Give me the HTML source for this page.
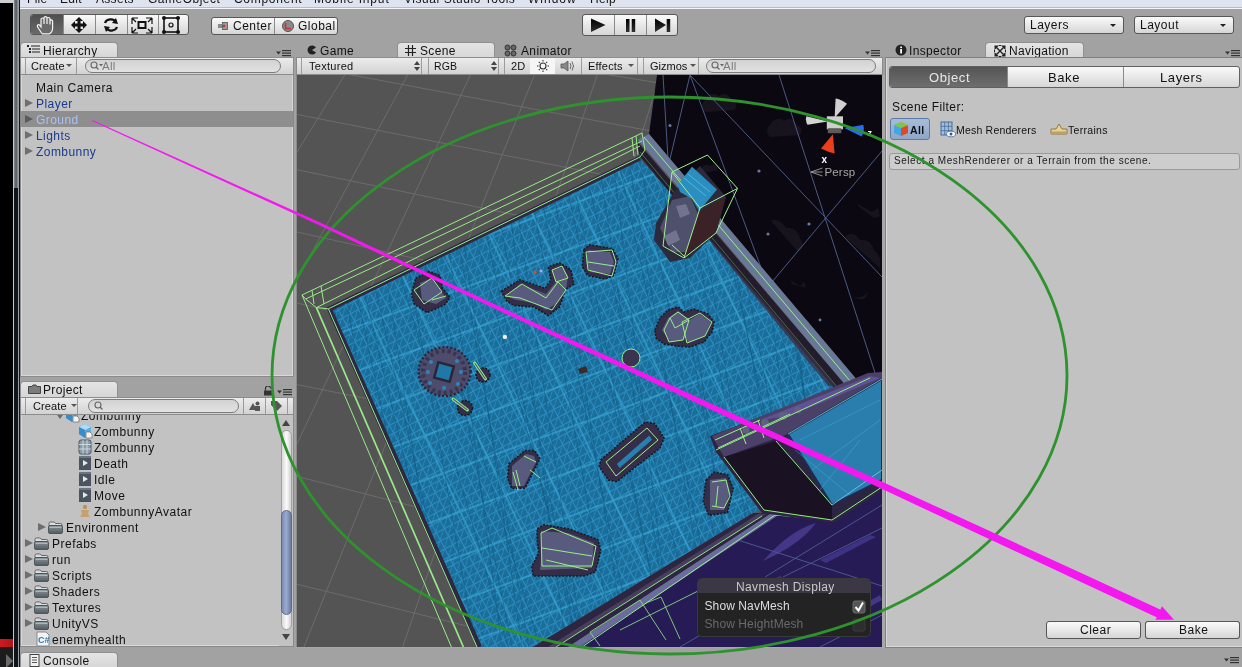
<!DOCTYPE html><html><head><meta charset="utf-8"><style>
*{margin:0;padding:0;box-sizing:border-box}
html,body{width:1242px;height:667px;overflow:hidden;background:#a2a2a2;font-family:"Liberation Sans",sans-serif;font-size:12px;color:#000}
body{position:relative}
.a{position:absolute}
.t{position:absolute;white-space:nowrap;line-height:1;will-change:transform}
.btn{position:absolute;background:linear-gradient(#fafafa,#d6d6d6);border:1px solid #575757;border-radius:3px}
.tab{position:absolute;background:linear-gradient(#e4e4e4,#d6d6d6);border:1px solid #909090;border-bottom:none;border-radius:4px 4px 0 0}
.tbar{position:absolute;background:linear-gradient(#ececec,#d2d2d2);border-top:1px solid #8c8c8c;border-bottom:1px solid #8c8c8c}
.search{position:absolute;background:linear-gradient(#d2d2d2,#e2e2e2);border:1px solid #7c7c7c;border-radius:8px}
svg{position:absolute;overflow:hidden;will-change:transform}
</style></head><body>
<div class="a" style="left:0px;top:0px;width:13px;height:667px;background:#000"></div>
<div class="a" style="left:0px;top:0px;width:13px;height:3px;background:#cfcfcf"></div>
<div class="a" style="left:0px;top:639px;width:13px;height:8px;background:linear-gradient(90deg,#d01a22,#b0141a)"></div>
<div class="a" style="left:0px;top:647px;width:13px;height:20px;background:#1c1c1c"></div>
<div class="a" style="left:6px;top:654px;width:0;height:0;border-left:7px solid #6a6a6a;border-top:7px solid transparent;border-bottom:7px solid transparent"></div>
<div class="a" style="left:13px;top:0px;width:7px;height:667px;background:linear-gradient(90deg,#c4c8cc 0,#c4c8cc 1px,#10141c 1px,#10141c 5px,#9aa0a6 5px,#9aa0a6 6px,#161616 6px)"></div>
<div class="a" style="left:14px;top:0px;width:4px;height:188px;background:linear-gradient(90deg,#8c9298,#5f6468 40%,#5f6468 70%,#9aa0a4)"></div>
<div class="a" style="left:20px;top:0px;width:1222px;height:7px;background:#dfe3ef"></div>
<div class="a" style="left:20px;top:7px;width:1222px;height:1px;background:#b8bcc8"></div>
<div class="a" style="left:20px;top:8px;width:1222px;height:1px;background:#f6f7fb"></div>
<div class="t" style="left:27px;top:-6.6px;font-size:12px;color:#141414;letter-spacing:0.3px;">File</div>
<div class="t" style="left:60px;top:-6.6px;font-size:12px;color:#141414;letter-spacing:0.3px;">Edit</div>
<div class="t" style="left:96px;top:-6.6px;font-size:12px;color:#141414;letter-spacing:0.3px;">Assets</div>
<div class="t" style="left:147.5px;top:-6.6px;font-size:12px;color:#141414;letter-spacing:0.5px;">GameObject</div>
<div class="t" style="left:233.5px;top:-6.6px;font-size:12px;color:#141414;letter-spacing:0.7px;">Component</div>
<div class="t" style="left:314px;top:-6.6px;font-size:12px;color:#141414;letter-spacing:0.85px;">Mobile Input</div>
<div class="t" style="left:403.5px;top:-6.6px;font-size:12px;color:#141414;letter-spacing:0.55px;">Visual Studio Tools</div>
<div class="t" style="left:527.5px;top:-6.6px;font-size:12px;color:#141414;letter-spacing:1.0px;">Window</div>
<div class="t" style="left:590px;top:-6.6px;font-size:12px;color:#141414;letter-spacing:0.3px;">Help</div>
<div class="btn" style="left:30px;top:14px;width:159px;height:21px"></div>
<div class="a" style="left:31px;top:15px;width:32px;height:19px;background:linear-gradient(#4e4e4e,#6a6a6a);border-radius:2px 0 0 2px"></div>
<div class="a" style="left:63px;top:15px;width:1px;height:19px;background:#8a8a8a"></div>
<div class="a" style="left:95px;top:15px;width:1px;height:19px;background:#8a8a8a"></div>
<div class="a" style="left:127px;top:15px;width:1px;height:19px;background:#8a8a8a"></div>
<div class="a" style="left:158px;top:15px;width:1px;height:19px;background:#8a8a8a"></div>
<svg style="left:30px;top:14px" width="160" height="22" viewBox="0 0 160 22">
<path d="M12 19.5 L8.5 14.5 Q6.5 11.5 8 10.8 Q9.2 10.3 11 12.8 L11 5.5 Q11 4 12.5 4 Q14 4 14 5.5 L14 10 L14 4 Q14 2.6 15.5 2.6 Q17 2.6 17 4 L17 10 L17 4.8 Q17 3.5 18.5 3.5 Q20 3.5 20 4.8 L20 10.5 L20 7 Q20 5.8 21.3 5.8 Q22.6 5.8 22.6 7 L22.6 14 Q22.6 18 19.5 19.8 L12.5 19.8 Z" fill="#6a6a6a" stroke="#f4f4f4" stroke-width="1.2"/>
<g fill="#111"><path d="M49 3 L53 7 L50.5 7 L50.5 9.5 L53 9.5 L53 7 L57 11 L53 15 L53 12.5 L50.5 12.5 L50.5 15 L53 15 L49 19 L45 15 L47.5 15 L47.5 12.5 L45 12.5 L45 15 L41 11 L45 7 L45 9.5 L47.5 9.5 L47.5 7 L45 7Z"/></g>
<g fill="none" stroke="#111" stroke-width="2.2"><path d="M75 9 A6 5 0 0 1 86 8"/><path d="M87 13 A6 5 0 0 1 76 14"/></g>
<g fill="#111"><path d="M86 4 L88 10 L82 9Z"/><path d="M76 18 L74 12 L80 13Z"/></g>
<g fill="none" stroke="#111" stroke-width="1.2"><path d="M102 4 L108 4 M102 4 L102 10 M102 4 L106 8"/><path d="M122 4 L116 4 M122 4 L122 10 M122 4 L118 8"/><path d="M102 19 L108 19 M102 19 L102 13 M102 19 L106 15"/><path d="M122 19 L116 19 M122 19 L122 13 M122 19 L118 15"/></g>
<rect x="108.5" y="8" width="7" height="6" fill="none" stroke="#111" stroke-width="2"/>
<rect x="134" y="4" width="14" height="14" fill="none" stroke="#111" stroke-width="1.6"/>
<g fill="#111"><circle cx="134" cy="4" r="2"/><circle cx="148" cy="4" r="2"/><circle cx="134" cy="18" r="2"/><circle cx="148" cy="18" r="2"/></g>
<circle cx="141" cy="11" r="2" fill="none" stroke="#111" stroke-width="1.2"/>
</svg>
<div class="btn" style="left:211px;top:17px;width:127px;height:18px"></div>
<div class="a" style="left:274px;top:18px;width:1px;height:16px;background:#8a8a8a"></div>
<svg style="left:216px;top:19px" width="14" height="14"><rect x="2" y="5" width="4" height="4" fill="#8a8a8a"/><rect x="6.5" y="3.5" width="5" height="7" fill="#9a9a9a" stroke="#555" stroke-width="0.8"/><circle cx="8" cy="7" r="1.3" fill="#d03030"/></svg>
<svg style="left:281px;top:19px" width="16" height="14"><circle cx="7" cy="7" r="5.5" fill="#8a8a8a" stroke="#555"/><path d="M4.5 4 V9.5 H10" stroke="#c83030" stroke-width="1.6" fill="none"/></svg>
<div class="t" style="left:233px;top:20.0px;font-size:12px;color:#111;letter-spacing:0.5px;">Center</div>
<div class="t" style="left:298px;top:20.0px;font-size:12px;color:#111;letter-spacing:0.5px;">Global</div>
<div class="btn" style="left:582px;top:14px;width:96px;height:22px"></div>
<div class="a" style="left:614px;top:15px;width:1px;height:20px;background:#8a8a8a"></div>
<div class="a" style="left:646px;top:15px;width:1px;height:20px;background:#8a8a8a"></div>
<svg style="left:582px;top:14px" width="96" height="22"><defs><linearGradient id="gk" x1="0" y1="0" x2="0" y2="1"><stop offset="0" stop-color="#000"/><stop offset="1" stop-color="#303030"/></linearGradient></defs>
<path d="M9 4.5 L23.5 11 L9 18Z" fill="url(#gk)"/>
<rect x="44" y="5" width="3.5" height="13" fill="url(#gk)"/><rect x="49.7" y="5" width="3.5" height="13" fill="url(#gk)"/>
<path d="M73 4.5 L84 11 L73 18Z" fill="url(#gk)"/><rect x="84.7" y="5" width="3.5" height="13" fill="url(#gk)"/>
</svg>
<div class="btn" style="left:1024px;top:16px;width:100px;height:18px"></div>
<div class="t" style="left:1030px;top:19.0px;font-size:12px;color:#111;letter-spacing:0.5px;">Layers</div>
<div class="a" style="left:1109.5px;top:23.5px;border-left:3.5px solid transparent;border-right:3.5px solid transparent;border-top:3.5px solid #222"></div>
<div class="btn" style="left:1134px;top:16px;width:100px;height:18px"></div>
<div class="t" style="left:1140px;top:19.0px;font-size:12px;color:#111;letter-spacing:0.5px;">Layout</div>
<div class="a" style="left:1219.5px;top:23.5px;border-left:3.5px solid transparent;border-right:3.5px solid transparent;border-top:3.5px solid #222"></div>
<div class="tab" style="left:20px;top:42px;width:98px;height:16px"></div>
<svg style="left:27px;top:45px" width="14" height="10"><g fill="#222"><rect x="0" y="0" width="2" height="2"/><rect x="2" y="3" width="2" height="2"/><rect x="2" y="6" width="2" height="2"/><rect x="4" y="0.5" width="9" height="1"/><rect x="5" y="3.5" width="8" height="1"/><rect x="5" y="6.5" width="8" height="1"/></g></svg>
<div class="t" style="left:43px;top:45.0px;font-size:12px;color:#111;letter-spacing:0.35px;">Hierarchy</div>
<svg style="left:276px;top:50px" width="16" height="7"><path d="M0 1.5 L5 1.5 L2.5 4.5Z" fill="#333"/><rect x="6" y="0" width="9" height="1.2" fill="#333"/><rect x="6" y="2.5" width="9" height="1.2" fill="#333"/><rect x="6" y="5" width="9" height="1.2" fill="#333"/></svg>
<div class="tbar" style="left:20px;top:57px;width:274px;height:18px"></div>
<div class="a" style="left:20px;top:57px;width:1px;height:18px;background:#8c8c8c"></div>
<div class="a" style="left:293px;top:57px;width:1px;height:320px;background:#8a8a8a"></div>
<div class="a" style="left:20px;top:75px;width:1px;height:302px;background:#8a8a8a"></div>
<div class="a" style="left:21px;top:75px;width:272px;height:301px;background:#c2c2c2;box-shadow:inset 1px 0 #d8d8d8,inset -1px 0 #d8d8d8,inset 0 -1px #d8d8d8"></div>
<div class="a" style="left:20px;top:376px;width:274px;height:1px;background:#8a8a8a"></div>
<div class="a" style="left:25px;top:58px;width:1px;height:16px;background:#9a9a9a"></div>
<div class="a" style="left:76px;top:58px;width:1px;height:16px;background:#9a9a9a"></div>
<div class="t" style="left:31px;top:60.9px;font-size:11px;color:#111;letter-spacing:0.1px;">Create</div>
<div class="a" style="left:66px;top:64px;border-left:3px solid transparent;border-right:3px solid transparent;border-top:3px solid #555"></div>
<div class="search" style="left:85px;top:59px;width:196px;height:14px"></div>
<svg style="left:90px;top:61px" width="16" height="10"><circle cx="4" cy="4" r="3" fill="none" stroke="#666" stroke-width="1.1"/><path d="M6 6 L8.5 8.5" stroke="#666" stroke-width="1.2"/><path d="M9 3 L13 3 L11 5.5Z" fill="#666"/></svg>
<div class="t" style="left:102px;top:60.5px;font-size:11.5px;color:#7a7a7a;letter-spacing:0.3px;">All</div>
<div class="a" style="left:21px;top:111px;width:272px;height:16px;background:#8e8e8e"></div>
<div class="t" style="left:36px;top:82.0px;font-size:12px;color:#111;letter-spacing:0.45px;">Main Camera</div>
<div class="t" style="left:36px;top:98.0px;font-size:12px;color:#1c3a8c;letter-spacing:0.45px;">Player</div>
<div class="a" style="left:25px;top:99px;border-top:4.5px solid transparent;border-bottom:4.5px solid transparent;border-left:8px solid #6e6e6e"></div>
<div class="t" style="left:36px;top:114.0px;font-size:12px;color:#a8c2fa;letter-spacing:0.45px;">Ground</div>
<div class="a" style="left:25px;top:115px;border-top:4.5px solid transparent;border-bottom:4.5px solid transparent;border-left:8px solid #5a5a5a"></div>
<div class="t" style="left:36px;top:130.0px;font-size:12px;color:#1c3a8c;letter-spacing:0.45px;">Lights</div>
<div class="a" style="left:25px;top:131px;border-top:4.5px solid transparent;border-bottom:4.5px solid transparent;border-left:8px solid #6e6e6e"></div>
<div class="t" style="left:36px;top:146.0px;font-size:12px;color:#1c3a8c;letter-spacing:0.45px;">Zombunny</div>
<div class="a" style="left:25px;top:147px;border-top:4.5px solid transparent;border-bottom:4.5px solid transparent;border-left:8px solid #6e6e6e"></div>
<div class="tab" style="left:20px;top:381px;width:98px;height:16px"></div>
<svg style="left:28px;top:384px" width="14" height="11"><path d="M0.5 2.5 L4 2.5 L5 1 L8 1 L9 2.5 L12.5 2.5 L12.5 9.5 L0.5 9.5Z" fill="#7c7c7c" stroke="#444"/></svg>
<div class="t" style="left:43px;top:384.0px;font-size:12px;color:#111;letter-spacing:0.35px;">Project</div>
<svg style="left:263px;top:386px" width="10" height="10"><path d="M2.5 4.5 L2.5 2.5 A2.5 2.5 0 0 1 7.5 2.5" fill="none" stroke="#333" stroke-width="1.2"/><rect x="1" y="4.5" width="8" height="5" fill="#333"/></svg>
<svg style="left:277px;top:389px" width="16" height="7"><path d="M0 1.5 L5 1.5 L2.5 4.5Z" fill="#333"/><rect x="6" y="0" width="9" height="1.2" fill="#333"/><rect x="6" y="2.5" width="9" height="1.2" fill="#333"/><rect x="6" y="5" width="9" height="1.2" fill="#333"/></svg>
<div class="tbar" style="left:20px;top:397px;width:274px;height:18px"></div>
<div class="a" style="left:20px;top:397px;width:1px;height:18px;background:#8c8c8c"></div>
<div class="a" style="left:293px;top:397px;width:1px;height:250px;background:#8a8a8a"></div>
<div class="a" style="left:20px;top:415px;width:1px;height:232px;background:#8a8a8a"></div>
<div class="a" style="left:21px;top:415px;width:272px;height:231px;background:#c2c2c2;box-shadow:inset 1px 0 #d8d8d8,inset -1px 0 #d8d8d8,inset 0 -1px #d8d8d8"></div>
<div class="a" style="left:20px;top:646px;width:274px;height:1px;background:#8a8a8a"></div>
<div class="a" style="left:25px;top:398px;width:1px;height:16px;background:#9a9a9a"></div>
<div class="a" style="left:77px;top:398px;width:1px;height:16px;background:#9a9a9a"></div>
<div class="t" style="left:33px;top:400.9px;font-size:11px;color:#111;letter-spacing:0.1px;">Create</div>
<div class="a" style="left:71px;top:404px;border-left:3px solid transparent;border-right:3px solid transparent;border-top:3px solid #555"></div>
<div class="search" style="left:88px;top:399px;width:151px;height:14px"></div>
<svg style="left:94px;top:401px" width="12" height="10"><circle cx="4" cy="4" r="3" fill="none" stroke="#666" stroke-width="1.1"/><path d="M6 6 L8.5 8.5" stroke="#666" stroke-width="1.2"/></svg>
<div class="a" style="left:243px;top:398px;width:1px;height:16px;background:#9a9a9a"></div>
<div class="a" style="left:265px;top:398px;width:1px;height:16px;background:#9a9a9a"></div>
<div class="a" style="left:287px;top:398px;width:1px;height:16px;background:#9a9a9a"></div>
<svg style="left:248px;top:400px" width="14" height="12"><path d="M1 10 L5 3 L9 10Z" fill="#555"/><rect x="7" y="6" width="5" height="5" fill="#555"/><circle cx="9.5" cy="3.5" r="2" fill="#555"/></svg>
<svg style="left:270px;top:400px" width="14" height="12"><path d="M1 1 L7 1 L12 6 L7 11 L1 5Z" fill="#555"/></svg>
<svg style="left:0;top:0" width="0" height="0"><defs><linearGradient id="fg" x1="0" y1="0" x2="0" y2="1"><stop offset="0" stop-color="#8a969c"/><stop offset="1" stop-color="#505a60"/></linearGradient></defs></svg>
<div class="a" style="left:21px;top:415px;width:258px;height:231px;overflow:hidden">
<div class="t" style="left:60px;top:-5.0px;font-size:12px;color:#111;letter-spacing:0.5px;">Zombunny</div>
<svg style="left:43px;top:-8px" width="16" height="16"><path d="M2 4 L8 1 L14 4 L14 11 L8 15 L2 11Z" fill="#5ab0e0"/><path d="M2 4 L8 7 L14 4 L8 1Z" fill="#a8dcf8"/><path d="M8 7 L8 15 L2 11 L2 4Z" fill="#3a8cc8"/><path d="M9 9 L13 9 L15 11 L15 15 L9 15Z" fill="#f4f4f4" stroke="#555" stroke-width="0.6"/></svg>
<div class="a" style="left:34px;top:-3px;border-left:5px solid transparent;border-right:5px solid transparent;border-top:7px solid #6a6a6a"></div>
<div class="t" style="left:73px;top:11.0px;font-size:12px;color:#111;letter-spacing:0.5px;">Zombunny</div>
<svg style="left:56px;top:8px" width="16" height="16"><path d="M2 4 L8 1 L14 4 L14 11 L8 15 L2 11Z" fill="#5ab0e0"/><path d="M2 4 L8 7 L14 4 L8 1Z" fill="#a8dcf8"/><path d="M8 7 L8 15 L2 11 L2 4Z" fill="#3a8cc8"/><path d="M9 9 L13 9 L15 11 L15 15 L9 15Z" fill="#f4f4f4" stroke="#555" stroke-width="0.6"/></svg>
<div class="t" style="left:73px;top:27.0px;font-size:12px;color:#111;letter-spacing:0.5px;">Zombunny</div>
<svg style="left:56px;top:24px" width="16" height="16"><rect x="2" y="1" width="12" height="14" rx="2" fill="#8a9aa8" stroke="#4a5a68"/><path d="M6 1 V15 M10 1 V15 M2 5.5 H14 M2 10 H14" stroke="#d8e4ec" stroke-width="0.8"/></svg>
<div class="t" style="left:73px;top:43.0px;font-size:12px;color:#111;letter-spacing:0.5px;">Death</div>
<svg style="left:56px;top:40px" width="16" height="16"><rect x="2" y="1" width="12" height="14" fill="#4a5560"/><rect x="2" y="1" width="12" height="2" fill="#6a7580"/><path d="M6 5 L11 8 L6 11Z" fill="#e8e8e8"/></svg>
<div class="t" style="left:73px;top:59.0px;font-size:12px;color:#111;letter-spacing:0.5px;">Idle</div>
<svg style="left:56px;top:56px" width="16" height="16"><rect x="2" y="1" width="12" height="14" fill="#4a5560"/><rect x="2" y="1" width="12" height="2" fill="#6a7580"/><path d="M6 5 L11 8 L6 11Z" fill="#e8e8e8"/></svg>
<div class="t" style="left:73px;top:75.0px;font-size:12px;color:#111;letter-spacing:0.5px;">Move</div>
<svg style="left:56px;top:72px" width="16" height="16"><rect x="2" y="1" width="12" height="14" fill="#4a5560"/><rect x="2" y="1" width="12" height="2" fill="#6a7580"/><path d="M6 5 L11 8 L6 11Z" fill="#e8e8e8"/></svg>
<div class="t" style="left:73px;top:91.0px;font-size:12px;color:#111;letter-spacing:0.5px;">ZombunnyAvatar</div>
<svg style="left:56px;top:88px" width="16" height="16"><circle cx="8" cy="4" r="2.2" fill="#c09060"/><path d="M4 7 L12 7 L11 11 L13 14 L3 14 L5 11Z" fill="#c8a070"/></svg>
<div class="t" style="left:45px;top:107.0px;font-size:12px;color:#111;letter-spacing:0.5px;">Environment</div>
<svg style="left:27px;top:106px" width="16" height="14"><path d="M1 4.5 L1 2.5 Q1 1 2.5 1 L5.5 1 Q7 1 7.5 2.5 L12.5 2.5 Q14 2.5 14 4 L14 4.5Z" fill="#dcdcdc" stroke="#5a5a5a" stroke-width="0.9"/><rect x="0.5" y="4.5" width="14" height="8" rx="1.5" fill="url(#fg)" stroke="#4a5054" stroke-width="0.9"/><rect x="1.5" y="5.8" width="12" height="1" fill="#b4c4cc"/></svg>
<div class="a" style="left:17px;top:108px;border-top:4.5px solid transparent;border-bottom:4.5px solid transparent;border-left:8px solid #6e6e6e"></div>
<div class="t" style="left:31px;top:123.0px;font-size:12px;color:#111;letter-spacing:0.5px;">Prefabs</div>
<svg style="left:13px;top:122px" width="16" height="14"><path d="M1 4.5 L1 2.5 Q1 1 2.5 1 L5.5 1 Q7 1 7.5 2.5 L12.5 2.5 Q14 2.5 14 4 L14 4.5Z" fill="#dcdcdc" stroke="#5a5a5a" stroke-width="0.9"/><rect x="0.5" y="4.5" width="14" height="8" rx="1.5" fill="url(#fg)" stroke="#4a5054" stroke-width="0.9"/><rect x="1.5" y="5.8" width="12" height="1" fill="#b4c4cc"/></svg>
<div class="a" style="left:4px;top:124px;border-top:4.5px solid transparent;border-bottom:4.5px solid transparent;border-left:8px solid #6e6e6e"></div>
<div class="t" style="left:31px;top:139.0px;font-size:12px;color:#111;letter-spacing:0.5px;">run</div>
<svg style="left:13px;top:138px" width="16" height="14"><path d="M1 4.5 L1 2.5 Q1 1 2.5 1 L5.5 1 Q7 1 7.5 2.5 L12.5 2.5 Q14 2.5 14 4 L14 4.5Z" fill="#dcdcdc" stroke="#5a5a5a" stroke-width="0.9"/><rect x="0.5" y="4.5" width="14" height="8" rx="1.5" fill="url(#fg)" stroke="#4a5054" stroke-width="0.9"/><rect x="1.5" y="5.8" width="12" height="1" fill="#b4c4cc"/></svg>
<div class="a" style="left:4px;top:140px;border-top:4.5px solid transparent;border-bottom:4.5px solid transparent;border-left:8px solid #6e6e6e"></div>
<div class="t" style="left:31px;top:155.0px;font-size:12px;color:#111;letter-spacing:0.5px;">Scripts</div>
<svg style="left:13px;top:154px" width="16" height="14"><path d="M1 4.5 L1 2.5 Q1 1 2.5 1 L5.5 1 Q7 1 7.5 2.5 L12.5 2.5 Q14 2.5 14 4 L14 4.5Z" fill="#dcdcdc" stroke="#5a5a5a" stroke-width="0.9"/><rect x="0.5" y="4.5" width="14" height="8" rx="1.5" fill="url(#fg)" stroke="#4a5054" stroke-width="0.9"/><rect x="1.5" y="5.8" width="12" height="1" fill="#b4c4cc"/></svg>
<div class="a" style="left:4px;top:156px;border-top:4.5px solid transparent;border-bottom:4.5px solid transparent;border-left:8px solid #6e6e6e"></div>
<div class="t" style="left:31px;top:171.0px;font-size:12px;color:#111;letter-spacing:0.5px;">Shaders</div>
<svg style="left:13px;top:170px" width="16" height="14"><path d="M1 4.5 L1 2.5 Q1 1 2.5 1 L5.5 1 Q7 1 7.5 2.5 L12.5 2.5 Q14 2.5 14 4 L14 4.5Z" fill="#dcdcdc" stroke="#5a5a5a" stroke-width="0.9"/><rect x="0.5" y="4.5" width="14" height="8" rx="1.5" fill="url(#fg)" stroke="#4a5054" stroke-width="0.9"/><rect x="1.5" y="5.8" width="12" height="1" fill="#b4c4cc"/></svg>
<div class="a" style="left:4px;top:172px;border-top:4.5px solid transparent;border-bottom:4.5px solid transparent;border-left:8px solid #6e6e6e"></div>
<div class="t" style="left:31px;top:187.0px;font-size:12px;color:#111;letter-spacing:0.5px;">Textures</div>
<svg style="left:13px;top:186px" width="16" height="14"><path d="M1 4.5 L1 2.5 Q1 1 2.5 1 L5.5 1 Q7 1 7.5 2.5 L12.5 2.5 Q14 2.5 14 4 L14 4.5Z" fill="#dcdcdc" stroke="#5a5a5a" stroke-width="0.9"/><rect x="0.5" y="4.5" width="14" height="8" rx="1.5" fill="url(#fg)" stroke="#4a5054" stroke-width="0.9"/><rect x="1.5" y="5.8" width="12" height="1" fill="#b4c4cc"/></svg>
<div class="a" style="left:4px;top:188px;border-top:4.5px solid transparent;border-bottom:4.5px solid transparent;border-left:8px solid #6e6e6e"></div>
<div class="t" style="left:31px;top:203.0px;font-size:12px;color:#111;letter-spacing:0.5px;">UnityVS</div>
<svg style="left:13px;top:202px" width="16" height="14"><path d="M1 4.5 L1 2.5 Q1 1 2.5 1 L5.5 1 Q7 1 7.5 2.5 L12.5 2.5 Q14 2.5 14 4 L14 4.5Z" fill="#dcdcdc" stroke="#5a5a5a" stroke-width="0.9"/><rect x="0.5" y="4.5" width="14" height="8" rx="1.5" fill="url(#fg)" stroke="#4a5054" stroke-width="0.9"/><rect x="1.5" y="5.8" width="12" height="1" fill="#b4c4cc"/></svg>
<div class="a" style="left:4px;top:204px;border-top:4.5px solid transparent;border-bottom:4.5px solid transparent;border-left:8px solid #6e6e6e"></div>
<div class="t" style="left:31px;top:219.0px;font-size:12px;color:#111;letter-spacing:0.5px;">enemyhealth</div>
<svg style="left:14px;top:216px" width="16" height="16"><path d="M2 1 L11 1 L14 4 L14 15 L2 15Z" fill="#f4f4f4" stroke="#888"/><text x="3" y="12" font-size="9" font-family="Liberation Sans" fill="#2a7ab8" font-weight="bold">C#</text></svg>
</div>
<div class="a" style="left:279px;top:415px;width:14px;height:231px;background:#c2c2c2"></div>
<div class="a" style="left:281px;top:430px;width:11px;height:200px;border-radius:6px;background:linear-gradient(90deg,#d8d8d8,#fafafa 50%,#d0d0d0);border:1px solid #a0a0a0"></div>
<div class="a" style="left:281px;top:510px;width:11px;height:105px;border-radius:6px;background:linear-gradient(90deg,#7c8cb0,#9aaad0 45%,#6a7aa0);border:1px solid #5a6a8a"></div>
<div class="a" style="left:282px;top:420px;border-left:4px solid transparent;border-right:4px solid transparent;border-bottom:6px solid #444"></div>
<div class="a" style="left:282px;top:634px;border-left:4px solid transparent;border-right:4px solid transparent;border-top:6px solid #444"></div>
<div class="tab" style="left:20px;top:652px;width:98px;height:16px"></div>
<svg style="left:29px;top:654px" width="12" height="13"><rect x="1" y="0.5" width="9" height="12" fill="#f2f2f2" stroke="#444"/><path d="M3 3.5 H8 M3 6 H8 M3 8.5 H8" stroke="#444" stroke-width="0.9"/></svg>
<div class="t" style="left:43px;top:655.0px;font-size:12px;color:#111;letter-spacing:0.35px;">Console</div>
<svg style="left:1224px;top:657px" width="16" height="7"><path d="M0 1.5 L5 1.5 L2.5 4.5Z" fill="#333"/><rect x="6" y="0" width="9" height="1.2" fill="#333"/><rect x="6" y="2.5" width="9" height="1.2" fill="#333"/><rect x="6" y="5" width="9" height="1.2" fill="#333"/></svg>
<div class="tab" style="left:397px;top:42px;width:98px;height:16px"></div>
<svg style="left:306px;top:44.8px" width="12" height="10"><path d="M10 2.5 A4.6 4.6 0 1 0 10 7.5 L6 5Z" fill="#222"/></svg>
<div class="t" style="left:320px;top:45.0px;font-size:12px;color:#111;letter-spacing:0.35px;">Game</div>
<svg style="left:405px;top:45px" width="12" height="11"><path d="M3.5 0 V11 M7.5 0 V11 M0 3.5 H11 M0 7.5 H11" stroke="#222" stroke-width="1.2"/></svg>
<div class="t" style="left:420px;top:45.0px;font-size:12px;color:#111;letter-spacing:0.35px;">Scene</div>
<svg style="left:504px;top:44px" width="13" height="13"><circle cx="3.5" cy="3.5" r="2.5" fill="#666" stroke="#333"/><circle cx="9.5" cy="3.5" r="2.5" fill="#666" stroke="#333"/><circle cx="3.5" cy="9.5" r="2.5" fill="#666" stroke="#333"/><circle cx="9.5" cy="9.5" r="2.5" fill="#666" stroke="#333"/></svg>
<div class="t" style="left:520.5px;top:45.0px;font-size:12px;color:#111;letter-spacing:0.35px;">Animator</div>
<svg style="left:865px;top:50px" width="16" height="7"><path d="M0 1.5 L5 1.5 L2.5 4.5Z" fill="#333"/><rect x="6" y="0" width="9" height="1.2" fill="#333"/><rect x="6" y="2.5" width="9" height="1.2" fill="#333"/><rect x="6" y="5" width="9" height="1.2" fill="#333"/></svg>
<div class="tbar" style="left:296px;top:57px;width:587px;height:18px"></div>
<div class="a" style="left:296px;top:57px;width:1px;height:18px;background:#8a8a8a"></div>
<div class="a" style="left:882px;top:57px;width:1px;height:18px;background:#8a8a8a"></div>
<div class="a" style="left:301px;top:58px;width:1px;height:16px;background:#9c9c9c"></div>
<div class="a" style="left:421px;top:58px;width:1px;height:16px;background:#9c9c9c"></div>
<div class="a" style="left:428px;top:58px;width:1px;height:16px;background:#9c9c9c"></div>
<div class="a" style="left:498px;top:58px;width:1px;height:16px;background:#9c9c9c"></div>
<div class="a" style="left:504px;top:58px;width:1px;height:16px;background:#9c9c9c"></div>
<div class="a" style="left:581px;top:58px;width:1px;height:16px;background:#9c9c9c"></div>
<div class="a" style="left:637px;top:58px;width:1px;height:16px;background:#9c9c9c"></div>
<div class="a" style="left:643px;top:58px;width:1px;height:16px;background:#9c9c9c"></div>
<div class="a" style="left:698px;top:58px;width:1px;height:16px;background:#9c9c9c"></div>
<div class="t" style="left:308.5px;top:60.9px;font-size:11px;color:#111;letter-spacing:0.28px;">Textured</div>
<div class="t" style="left:434px;top:61.3px;font-size:10.5px;color:#111;letter-spacing:0.1px;">RGB</div>
<svg style="left:413px;top:60px" width="8" height="12"><path d="M1 5 L4 1 L7 5Z M1 7 L4 11 L7 7Z" fill="#444"/></svg>
<svg style="left:490px;top:60px" width="8" height="12"><path d="M1 5 L4 1 L7 5Z M1 7 L4 11 L7 7Z" fill="#444"/></svg>
<div class="t" style="left:510.5px;top:60.9px;font-size:11px;color:#111;letter-spacing:0.2px;">2D</div>
<div class="a" style="left:530px;top:58px;width:25px;height:16px;background:#f6f6f6"></div>
<svg style="left:533px;top:59px" width="20" height="14"><circle cx="10" cy="7" r="3" fill="none" stroke="#333" stroke-width="1.1"/><path d="M10 1 V2.5 M10 11.5 V13 M4 7 H5.5 M14.5 7 H16 M5.8 2.8 L6.8 3.8 M13.2 10.2 L14.2 11.2 M5.8 11.2 L6.8 10.2 M13.2 3.8 L14.2 2.8" stroke="#333" stroke-width="1.1"/></svg>
<svg style="left:558px;top:59px" width="20" height="14"><path d="M3 5 H6 L10 2 V12 L6 9 H3Z" fill="#888" stroke="#555" stroke-width="0.8"/><path d="M12 4 Q14 7 12 10 M14 2.5 Q17 7 14 11.5" stroke="#666" fill="none" stroke-width="1"/></svg>
<div class="t" style="left:587.5px;top:60.9px;font-size:11px;color:#111;letter-spacing:0.2px;">Effects</div>
<div class="a" style="left:628px;top:64px;border-left:3px solid transparent;border-right:3px solid transparent;border-top:3px solid #555"></div>
<div class="t" style="left:650px;top:60.9px;font-size:11px;color:#111;letter-spacing:0px;">Gizmos</div>
<div class="a" style="left:690px;top:64px;border-left:3px solid transparent;border-right:3px solid transparent;border-top:3px solid #555"></div>
<div class="search" style="left:706px;top:59px;width:170px;height:14px"></div>
<svg style="left:711px;top:61px" width="16" height="10"><circle cx="4" cy="4" r="3" fill="none" stroke="#666" stroke-width="1.1"/><path d="M6 6 L8.5 8.5" stroke="#666" stroke-width="1.2"/><path d="M9 3 L13 3 L11 5.5Z" fill="#666"/></svg>
<div class="t" style="left:723px;top:60.5px;font-size:11.5px;color:#7a7a7a;letter-spacing:0.3px;">All</div>
<div class="a" style="left:296px;top:75px;width:1px;height:572px;background:#8a8a8a"></div>
<div class="a" style="left:882px;top:75px;width:3px;height:572px;background:#a8a8a8"></div>
<div class="a" style="left:296px;top:647px;width:589px;height:1px;background:#a8a8a8"></div>
<svg style="left:297px;top:75px" width="585" height="572" viewBox="297 75 585 572">
<defs>
<pattern id="mesh" patternUnits="userSpaceOnUse" width="9" height="9" patternTransform="matrix(0.883 -0.469 0.469 0.883 0 0)"><rect width="9" height="9" fill="#1b6e9a"/><path d="M0 0.5 H9 M0.5 0 V9 M0 9 L9 0" stroke="#2c8ec2" stroke-width="1" fill="none"/></pattern>
<pattern id="big" patternUnits="userSpaceOnUse" width="48" height="42" patternTransform="matrix(0.94 -0.342 0.423 0.906 12 6)"><path d="M0 1 H48 M1 0 V42" stroke="#3aaad8" stroke-width="1.8" fill="none"/></pattern>
</defs>
<rect x="297" y="75" width="585" height="572" fill="#545454"/>
<path d="M344.8 75 L-9.8 647 M407.6 75 L98.7 647 M470.4 75 L201.6 647 M534.4 75 L303.9 647 M597.2 75 L402.7 647 M660 75 L482.7 647 M297 25 L882 118.6 M297 64.8 L882 174.2 M297 114.4 L882 229.6 M297 169.7 L882 290.8 M297 232 L882 363.0 M297 303 L882 440.5 M297 384.6 L882 501.6 M297 476.4 L882 626.7 M297 584.2 L882 728.1" stroke="#6c6c6c" stroke-width="1" fill="none"/>
<path d="M657 75 L882 75 L882 372 L856 379 L649 134 Z" fill="#0c0811"/>
<g fill="#18141d"><path d="M705 100 q6 -10 14 -4 q8 -6 12 4 q8 2 4 10 l-30 2 q-6 -6 0 -12z"/><path d="M770 125 q6 -10 14 -4 q8 -6 12 4 q8 2 4 10 l-30 2 q-6 -6 0 -12z"/><path d="M772 220 q8 -2 14 8 q10 -2 14 10 q6 8 -2 14 l-26 -30z"/><path d="M846 236 q8 -6 14 4 q10 -2 14 10 q8 6 6 18 l-34 -30z"/><path d="M858 204 l14 8 l6 -4 l2 8 l-6 2 l-16 -12z"/><path d="M852 296 q10 4 16 -4 q-2 12 -16 4z"/><path d="M790 280 l10 6 l4 -4 l2 6 l-14 -4z"/><path d="M700 170 q4 -8 10 -4 q6 -4 8 4 l-18 4z"/></g>
<path d="M690 75 L670 159 M663 75 L668 159 M690 75 L767 284 M690 75 L882 277 M779 75 L877 379 M882 151 L772 282" stroke="#4a5a84" stroke-width="1" fill="none"/>
<g fill="#6a7aa0"><circle cx="670" cy="125.5" r="1.5"/><circle cx="759" cy="171" r="1.6"/><circle cx="768" cy="234" r="1.5"/><circle cx="809" cy="224" r="1.6"/><circle cx="820" cy="320" r="1.4"/></g>
<path d="M576 647 L776 514 L834 520 L882 487 L882 647 Z" fill="#261b54"/>
<path d="M763 561 Q790 530 816 523 Q800 545 763 561Z M700 625 Q720 610 745 603 Q730 618 700 625Z M845 615 L880 595 L882 600 L850 618Z" fill="#4a3c90" opacity="0.85"/>
<path d="M700 528 L882 586 M765 577 L882 505 M783 577 L882 528 M680 647 L760 600 M820 647 L882 615" stroke="#4a5890" stroke-width="1" fill="none"/>
<clipPath id="fc"><path d="M329.5 309 L640 158 L850 394 L712 436 L718 452 L760 511 L753 513 L533 647 L482 647 Z"/></clipPath>
<path d="M329.5 309 L640 158 L850 394 L712 436 L718 452 L760 511 L753 513 L533 647 L482 647 Z" fill="url(#mesh)"/>
<path d="M329.5 309 L640 158 L850 394 L712 436 L718 452 L760 511 L753 513 L533 647 L482 647 Z" fill="url(#big)" opacity="0.6"/>
<path d="M334 306 L394 647 M347 300 L402 647 M357 295 L433 647 M364 291 L450 647 M375 286 L456 647 M387 280 L443 647 M400 274 L508 647 M409 270 L475 647 M424 262 L540 647 M435 257 L512 647 M449 250 L502 647 M459 245 L529 647 M464 243 L522 647 M476 237 L584 647 M486 232 L577 647 M501 225 L577 647 M511 220 L566 647 M518 216 L583 647 M534 208 L614 647 M543 205 L634 647 M555 199 L626 647 M568 192 L667 647 M575 189 L665 647 M588 182 L699 647 M601 176 L671 647 M614 170 L672 647 M620 167 L723 647 M629 162 L713 647 M639 157 L736 647 M656 149 L746 647 M668 143 L740 647 M678 139 L769 647 M688 134 L770 647 M701 127 L817 647 M709 124 L805 647 M716 120 L816 647 M732 112 L852 647 M745 106 L814 647 M752 102 L849 647 M760 99 L842 647 M772 93 L831 647 M782 88 L886 647 M794 82 L861 647 M807 76 L918 647 M816 72 L897 647" stroke="#135a82" stroke-width="1" opacity="0.55" fill="none" clip-path="url(#fc)"/>
<path d="M479.5 647 L329.5 309 L640 158" stroke="#2e2840" stroke-width="5" fill="none"/>
<path d="M640 157 L636 140 L848 388 L834 388 Z" fill="#231c2c"/>
<path d="M640 157 L634 148 L828 386 L836 386 Z" fill="#3a3048" opacity="0.8"/>
<path d="M638 140 L649 134 L864 388 L848 388 Z" fill="#6a7898"/>
<path d="M644 137 L856 388" stroke="#98f088" stroke-width="1" fill="none"/>
<path d="M640 152 L838 388" stroke="#4a6a40" stroke-width="1" fill="none"/>
<path d="M533 647 L753 513 L778 513 L576 647 Z" fill="#2e2640"/>
<path d="M548 647 L758 514 L766 514 L556 647Z" fill="#4a4060" opacity="0.9"/>
<path d="M568 647 L770 514 L780 514 L580 647Z" fill="#6a6c9c"/>
<path d="M582 647 L775 515 L834 520 L882 487" stroke="#98f090" stroke-width="1" fill="none"/>
<path d="M556 647 L762 516" stroke="#88e080" stroke-width="1" fill="none"/>
<path d="M600 646 L590 632 L640 600 L666 640 M646 603 L661 597 L680 639 M620 630 L700 590 L720 610" stroke="#88d880" stroke-width="0.9" fill="none"/>
<g fill="#4a3a98" opacity="0.7"><path d="M820 560 l50 -25 l6 2 l-50 26z"/><path d="M700 620 l40 -18 l4 2 l-40 19z"/><path d="M760 585 l20 -9 l3 2 l-20 9z"/></g>
<path d="M710 436 L883 371 L883 490 L834 523 L762 513 L716 452 Z" fill="#2c2440"/>
<path d="M712 436 L868 373 L883 372 L883 379 L788 434 L724 457 Z" fill="#4a4068"/>
<path d="M760 420 L870 376 L880 378 L790 416 Z" fill="#6a58a8" opacity="0.7"/>
<g fill="#5e6282"><circle cx="765" cy="423" r="4"/><circle cx="783" cy="416" r="4"/><circle cx="798" cy="410" r="3.5"/><circle cx="746" cy="430" r="3.5"/></g>
<path d="M715 440 L760 420 M718 448 L790 414 M740 428 L746 444 M758 420 L764 438" stroke="#98f088" stroke-width="1" fill="none"/>
<path d="M724 457 L776 441 L832 505 L832 520 L764 510 Z" fill="#1a1222"/>
<path d="M788 434 L882 379 L882 480 L832 505 Z" fill="#2a7eae" stroke="#1e2c50" stroke-width="2"/><path d="M800 440 L880 400 M812 470 L880 420 M820 490 L860 440 M795 450 L850 495" stroke="#4ab0d8" stroke-width="0.7" opacity="0.6" fill="none"/>
<path d="M716 450 L870 378 M724 457 L764 510 L832 520 L882 487 M776 441 L832 505" stroke="#90f080" stroke-width="1" fill="none"/>
<path d="M788 434 L882 379 M832 505 L882 470" stroke="#7ad0e0" stroke-width="0.8" fill="none"/>
<path d="M656 223 L674 192 L700 166 L726 197 L716 233 L690 258 L670 262 L654 240 Z" fill="#2c2a3c"/>
<path d="M660 228 L672 200 L690 196 L698 214 L686 252 L672 252Z" fill="#4e506c"/>
<path d="M664 236 L676 230 L680 240 L668 246Z M676 206 L686 204 L690 214 L680 218Z" fill="#7a7c98" opacity="0.8"/>
<path d="M699 212 L725.5 197 L716 233 L684 257 Z" fill="#3a2226"/>
<path d="M677.6 184.8 L692 166.8 L717 189.6 L699.2 211 L692 199 L680 192 Z" fill="#2a8ec0"/>
<path d="M684 178 L706 196 M688 174 L710 192" stroke="#5ac0e8" stroke-width="0.8" fill="none"/>
<path d="M672 172 L707.5 155 L737.5 188.4 L700 208 Z M672 172 L663 246 L684 258 L700 208 M737.5 188.4 L716 233 L684 258 M672 245 L684 256" stroke="#a0f090" stroke-width="1" fill="none"/>
<g stroke="#98ec88" stroke-width="1" fill="none">
<path d="M302 295 L642 133 M305.6 299 L642 141 M316.4 307.6 L640 146 M328.4 308.8 L640 157"/>
<path d="M302 295 L305.6 299 L316.4 307.6 L328.4 308.8 M312 290 L314 304 M321 286 L324 304 M642 133 L645 150 L640 157 M636 136 L638 155 M632 138 L634 156"/>
<path d="M302 295 L451.4 647 M328.4 308.8 L477 647"/><path d="M316.4 307.6 L463.4 647" stroke-width="1.7"/>
</g>
<polygon points="415.7,278.4 428.5,271.3 439.9,275.6 442.7,288.4 449.9,297.0 445.6,304.1 437.0,308.4 427.1,312.6 414.2,304.1 411.4,294.1" fill="#362e48" stroke="#101c28" stroke-width="1.6" stroke-dasharray="2 1.5"/>
<polygon points="501.2,291.3 519.7,279.9 545.3,288.4 551.0,279.9 548.2,267.0 559.6,262.8 571.0,269.9 573.8,284.1 565.3,289.8 559.6,306.9 548.2,315.5 533.9,306.9 514.0,305.5 506.9,301.2" fill="#362e48" stroke="#101c28" stroke-width="1.6" stroke-dasharray="2 1.5"/>
<polygon points="583.8,249.9 589.5,244.8 612.3,248.5 618.0,258.5 613.7,275.6 605.2,279.0 588.1,275.6 582.4,267.0" fill="#362e48" stroke="#101c28" stroke-width="1.6" stroke-dasharray="2 1.5"/>
<polygon points="655,330 660,318 668,310 678,307 684,312 694,309 708,314 714,322 712,332 704,342 690,347 676,346 664,344 656,338" fill="#362e48" stroke="#101c28" stroke-width="1.6" stroke-dasharray="2 1.5"/>
<polygon points="600.7,459.9 645.2,422.1 654.7,423.5 664.1,438.3 660.1,447.8 616.9,481.5 608.8,480.2 599.3,466.7" fill="#362e48" stroke="#101c28" stroke-width="1.6" stroke-dasharray="2 1.5"/>
<polygon points="508.9,464.0 525.1,450.5 534.5,450.5 539.9,458.6 525.1,488.3 511.6,488.3 507.5,477.5" fill="#362e48" stroke="#101c28" stroke-width="1.6" stroke-dasharray="2 1.5"/>
<polygon points="706.0,480.2 714.1,472.1 727.6,474.8 733.0,488.3 727.6,512.6 708.7,515.3 703.3,501.8" fill="#362e48" stroke="#101c28" stroke-width="1.6" stroke-dasharray="2 1.5"/>
<polygon points="537.2,528.8 544.0,524.7 568.3,528.8 598.0,539.6 600.7,550.4 595.3,572.0 584.5,576.0 533.2,576.0 531.8,566.6 538.6,553.1 537.2,539.6" fill="#362e48" stroke="#101c28" stroke-width="1.6" stroke-dasharray="2 1.5"/>
<g fill="#585a7e">
<path d="M420 283 L432 278 L440 290 L446 298 L436 304 L422 300 Z"/>
<path d="M506 296 L520 284 L546 294 L556 282 L552 270 L562 267 L568 276 L566 290 L556 304 L546 310 L534 303 L516 300Z"/>
<path d="M588 250 L610 252 L614 262 L610 274 L590 272 L586 262Z"/>
<path d="M662 330 L668 318 L678 311 L690 320 L684 340 L670 342Z M682 324 L700 314 L711 322 L705 336 L688 343Z"/>
<path d="M541 531 L568 533 L594 543 L592 568 L540 570 L542 550Z"/>
<path d="M710 480 L726 478 L730 492 L724 510 L710 510Z"/>
<path d="M512 466 L526 454 L534 456 L536 462 L524 486 L512 486Z"/>
</g>
<polygon points="616.9,464.0 649.3,435.6 652.0,439.7 619.6,468.0" fill="#2680b0"/>
<ellipse cx="444.6" cy="371.6" rx="26" ry="24.5" fill="#4e4c6c" stroke="#2a2638" stroke-width="2.5" stroke-dasharray="2 2"/>
<circle cx="444" cy="372" r="21" fill="none" stroke="#3a3450" stroke-width="4" stroke-dasharray="3 3"/>
<path d="M436 364 L452 364 L452 380 L436 380Z" fill="#1f78a8" stroke="#2a2638" stroke-width="2.5" transform="rotate(15 444 372)"/>
<g fill="#2a88b8"><circle cx="431" cy="362" r="2"/><circle cx="457" cy="361" r="2"/><circle cx="430" cy="383" r="2"/><circle cx="458" cy="384" r="2"/><circle cx="444" cy="388" r="2"/><circle cx="428" cy="372" r="2"/><circle cx="461" cy="372" r="2"/></g>
<circle cx="631" cy="358" r="9" fill="#3a3450" stroke="#90f080" stroke-width="1"/>
<circle cx="483" cy="375" r="7" fill="#362e48" stroke="#101c28" stroke-width="1.6" stroke-dasharray="2 1.5"/><circle cx="465" cy="408" r="7.5" fill="#362e48" stroke="#101c28" stroke-width="1.6" stroke-dasharray="2 1.5"/>
<path d="M474.6 363 L485.4 378.8 M453 399 L467.4 410" stroke="#98f088" stroke-width="3" stroke-linecap="round"/><path d="M474.6 363 L485.4 378.8 M453 399 L467.4 410" stroke="#5a5a7a" stroke-width="1.2"/>
<g stroke="#98f088" stroke-width="1" fill="none">
<path d="M414 290 L432 278 L442 292 L424 304Z M432 300 L446 296"/>
<path d="M505 296 L522 284 L546 298 L558 282 L566 290 L552 310 L520 298Z M552 270 L562 266 L568 278 L556 282Z"/>
<path d="M586 252 L612 250 L616 262 L612 276 L588 270Z M588 262 L614 266"/>
<path d="M664 330 L670 318 L678 312 L689 320 L683 340 L669 342Z M682 322 L700 313 L712 322 L705 336 L687 343Z M670 318 L675 328 L689 320"/>
<path d="M606 462 L647 428 L658 440 L616 476Z"/>
<path d="M541 533 L552 528 L596 546 L592 566 L542 566 Z M542 548 L592 556 M546 560 L588 570"/>
<path d="M513 472 L518 490 M524 456 L536 462 M516 470 L520 486 M530 470 L540 478"/>
<path d="M712 482 L726 480 L730 496 L724 508 L712 506 M718 486 L716 506"/>

</g>
<circle cx="504.9" cy="336.9" r="2.2" fill="#f0f0f0"/>
<circle cx="535" cy="272" r="1.6" fill="#e05020"/><circle cx="541" cy="271" r="1.6" fill="#b0a0f0"/>
<path d="M578 369 L586 366 L588 372 L580 374Z" fill="#3a2a2a"/>
<path d="M835.6 98.4 Q841 99 847 103.8 L834.6 118Z" fill="#d0d0d0"/>
<path d="M806.4 116.3 Q805 120.5 807.5 124.8 L827.8 121.4Z" fill="#d4d4d4"/>
<path d="M821 148.5 Q828 152 834.6 153.6 L832.9 134.3Z" fill="#e8401a"/>
<path d="M844.7 128.2 L863.3 124.8 Q865 131 861.6 136.6Z" fill="#2a6af0"/>
<rect x="826.8" y="116.3" width="16.2" height="13" fill="#cfcfcf"/><rect x="827.8" y="128.2" width="13.5" height="5" fill="#5a5a5a"/>
<text x="821.5" y="163" font-size="10" font-weight="bold" fill="#fff" font-family="Liberation Sans">x</text>
<text x="867.5" y="135.5" font-size="9" font-weight="bold" fill="#fff" font-family="Liberation Sans">z</text>
<path d="M822.5 168 L811 172 L822.5 176 M811 172 L822.5 172" stroke="#a0a0a0" stroke-width="0.9" fill="none"/>
<text x="824.4" y="176.3" font-size="11.5" fill="#a8a8a8" font-family="Liberation Sans" letter-spacing="0.2">Persp</text>
<rect x="697.5" y="578.5" width="173" height="58" rx="4" fill="#232323" stroke="#3a3a3a" stroke-width="1"/>
<path d="M698 593 L698 582 Q698 579 701.5 579 L867 579 Q870 579 870 582 L870 593Z" fill="#3b3744"/>
<text x="736" y="591" font-size="12" fill="#c8c8c8" font-family="Liberation Sans" letter-spacing="0.35">Navmesh Display</text>
<text x="704.5" y="610" font-size="12" fill="#dedede" font-family="Liberation Sans" letter-spacing="0.1">Show NavMesh</text>
<text x="704.5" y="628" font-size="12" fill="#6a6a6a" font-family="Liberation Sans" letter-spacing="0.1">Show HeightMesh</text>
<rect x="853" y="601" width="12" height="12" rx="2" fill="#555" stroke="#6a6a6a"/>
<path d="M855.5 607 L858.5 610.5 L863 602.5" stroke="#fff" stroke-width="2" fill="none"/>
<rect x="853" y="619" width="12" height="12" rx="2" fill="#2e2e2e" stroke="#3a3a3a"/>
</svg>
<svg style="left:895px;top:44px" width="12" height="12"><circle cx="6" cy="6" r="5.5" fill="#222"/><rect x="5.2" y="5" width="1.8" height="4.5" fill="#fff"/><rect x="5.2" y="2.5" width="1.8" height="1.6" fill="#fff"/></svg>
<div class="t" style="left:909px;top:45.0px;font-size:12px;color:#111;letter-spacing:0.35px;">Inspector</div>
<div class="tab" style="left:985px;top:42px;width:99px;height:16px"></div>
<svg style="left:994px;top:45px" width="12" height="12"><path d="M2.5 2.5 L9.5 9.5 M9.5 2.5 L2.5 9.5" stroke="#222" stroke-width="1.4"/><path d="M0.5 0.5 L5 0.5 L0.5 5Z M11.5 11.5 L7 11.5 L11.5 7Z M11.5 0.5 L11.5 5 L7 0.5Z M0.5 11.5 L0.5 7 L5 11.5Z" fill="#222"/><path d="M0.5 5 V7 M11.5 5 V7 M5 0.5 H7 M5 11.5 H7" stroke="#222" stroke-width="1"/></svg>
<div class="t" style="left:1009px;top:45.0px;font-size:12px;color:#111;letter-spacing:0.3px;">Navigation</div>
<svg style="left:1225px;top:50px" width="16" height="7"><path d="M0 1.5 L5 1.5 L2.5 4.5Z" fill="#333"/><rect x="6" y="0" width="9" height="1.2" fill="#333"/><rect x="6" y="2.5" width="9" height="1.2" fill="#333"/><rect x="6" y="5" width="9" height="1.2" fill="#333"/></svg>
<div class="a" style="left:885px;top:57px;width:357px;height:591px;background:#c2c2c2;border:1px solid #808080;border-right:none;box-shadow:inset 1px 0 #d8d8d8,inset 0 -1px #d8d8d8"></div>
<div class="btn" style="left:889px;top:66px;width:351px;height:22px;border-color:#606060"></div>
<div class="a" style="left:890px;top:67px;width:117px;height:20px;background:linear-gradient(#555,#6e6e6e);border-radius:2px 0 0 2px"></div>
<div class="a" style="left:1007px;top:67px;width:1px;height:20px;background:#8a8a8a"></div>
<div class="a" style="left:1123px;top:67px;width:1px;height:20px;background:#8a8a8a"></div>
<div class="t" style="left:928.5px;top:71.2px;font-size:13px;color:#e8e8e8;letter-spacing:0.6px;">Object</div>
<div class="t" style="left:1048px;top:71.2px;font-size:13px;color:#111;letter-spacing:0.6px;">Bake</div>
<div class="t" style="left:1160px;top:71.2px;font-size:13px;color:#111;letter-spacing:0.6px;">Layers</div>
<div class="t" style="left:892px;top:101.0px;font-size:12px;color:#111;letter-spacing:0.4px;">Scene Filter:</div>
<div class="a" style="left:890px;top:118px;width:40px;height:22px;background:linear-gradient(#a8bcd8,#8ea6c8);border:1px solid #5c7aa8;border-radius:3px"></div>
<svg style="left:893px;top:121px" width="16" height="16"><path d="M1 4 L8 1 L15 4 L15 12 L8 15 L1 12Z" fill="#e0a020"/><path d="M1 4 L8 7 L8 15 L1 12Z" fill="#40a8e8"/><path d="M8 7 L15 4 L15 12 L8 15Z" fill="#e04828"/><path d="M1 4 L8 1 L15 4 L8 7Z" fill="#78c850"/></svg>
<div class="t" style="left:910px;top:125.3px;font-size:10.5px;color:#111;letter-spacing:0.4px;font-weight:bold">All</div>
<svg style="left:940px;top:121px" width="16" height="17"><rect x="1" y="1" width="11" height="13" fill="#9cc0e0" stroke="#4a6a98"/><path d="M4.7 1 V14 M8.4 1 V14 M1 5.3 H12 M1 9.6 H12" stroke="#4a6a98" stroke-width="0.8"/><ellipse cx="11" cy="13" rx="4.5" ry="2.8" fill="#fff" stroke="#4a6a98" stroke-width="0.8"/><circle cx="11" cy="13" r="1.5" fill="#2a5a98"/></svg>
<div class="t" style="left:956px;top:125.3px;font-size:10.5px;color:#111;letter-spacing:0.2px;">Mesh Renderers</div>
<svg style="left:1050px;top:122px" width="18" height="14"><path d="M1 12 L1 7 L6 7 L9 2 L12 7 L17 7 L17 12Z" fill="#e8d090" stroke="#8a7040" stroke-width="0.9"/><rect x="1" y="9.5" width="16" height="2.5" fill="#c0a060"/></svg>
<div class="t" style="left:1068px;top:125.3px;font-size:10.5px;color:#111;letter-spacing:0.3px;">Terrains</div>
<div class="a" style="left:889px;top:153px;width:351px;height:17px;background:#cdcdcd;border:1px solid #9a9a9a;border-radius:3px"></div>
<div class="t" style="left:893.5px;top:156.2px;font-size:10px;color:#1a1a1a;letter-spacing:0.55px;">Select a MeshRenderer or a Terrain from the scene.</div>
<div class="btn" style="left:1046px;top:621px;width:95px;height:18px"></div>
<div class="t" style="left:1080px;top:624.0px;font-size:12px;color:#111;letter-spacing:0.5px;">Clear</div>
<div class="btn" style="left:1145px;top:621px;width:95px;height:18px"></div>
<div class="t" style="left:1179px;top:624.0px;font-size:12px;color:#111;letter-spacing:0.5px;">Bake</div>
<svg style="left:0;top:0;pointer-events:none" width="1242" height="667">
<ellipse cx="669.5" cy="375.5" rx="397.5" ry="278.5" fill="none" stroke="#2e922e" stroke-width="2.8"/>
<defs><clipPath id="arrclip"><rect x="0" y="0" width="1242" height="619.7"/></clipPath></defs>
<g clip-path="url(#arrclip)"><polygon points="92.4,120.1 320.6,222.7 490.8,302.5 701.1,398.9 891.4,485.9 1081.7,573.3 1161.8,610.3 1158.2,618.1 1078.3,580.7 888.6,492.1 698.9,403.9 489.2,306.1 319.4,225.3 92.0,121.1" fill="#f418f0"/>
<polygon points="1162,606.2 1175.5,621.5 1155,621" fill="#f418f0"/></g>
</svg>
<div class="btn" style="left:1145px;top:621px;width:95px;height:18px"></div>
<div class="t" style="left:1179px;top:624.0px;font-size:12px;color:#111;letter-spacing:0.5px;">Bake</div>
</body></html>
